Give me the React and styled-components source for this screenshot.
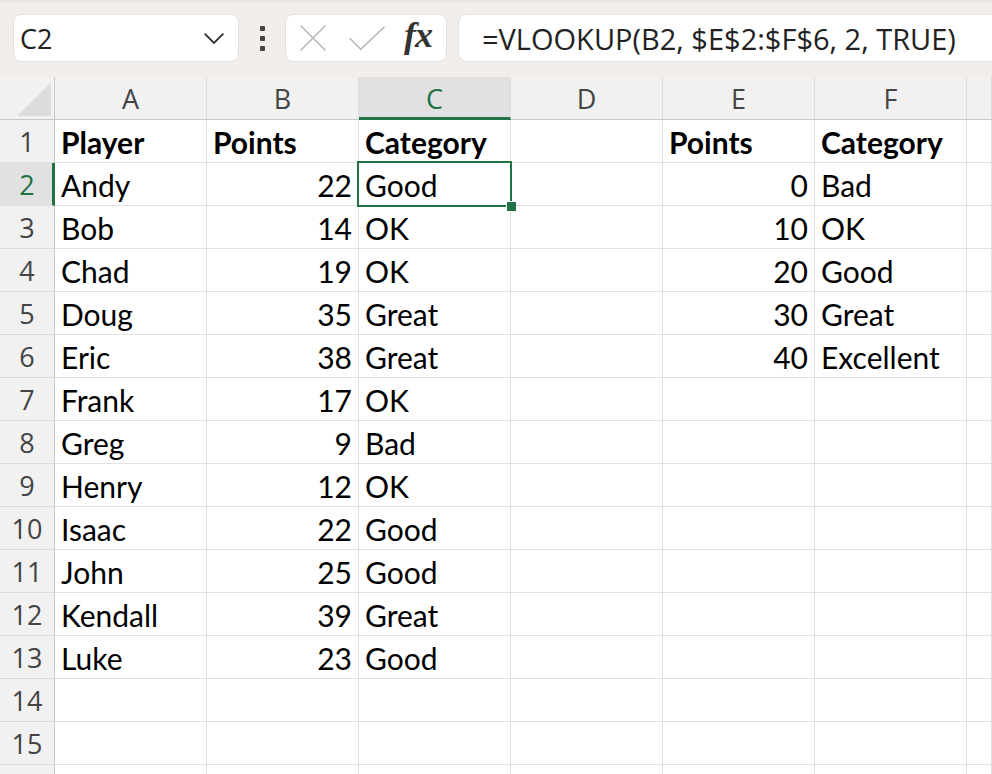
import React from 'react'
import styled, { createGlobalStyle, css } from 'styled-components'

const GlobalStyle = createGlobalStyle`
  html, body {
    margin: 0;
    padding: 0;
    background: #ffffff;
    overflow: hidden;
  }
  * { box-sizing: border-box; }
`

const COLS = ['A', 'B', 'C', 'D', 'E', 'F', '']
const SELECTED_COL = 'C'
const SELECTED_ROW = 2
const VISIBLE_ROWS = 15

const data = [
  [{ v: 'Player', b: true }, { v: 'Points', b: true }, { v: 'Category', b: true }, null, { v: 'Points', b: true }, { v: 'Category', b: true }],
  ['Andy', 22, 'Good', null, 0, 'Bad'],
  ['Bob', 14, 'OK', null, 10, 'OK'],
  ['Chad', 19, 'OK', null, 20, 'Good'],
  ['Doug', 35, 'Great', null, 30, 'Great'],
  ['Eric', 38, 'Great', null, 40, 'Excellent'],
  ['Frank', 17, 'OK'],
  ['Greg', 9, 'Bad'],
  ['Henry', 12, 'OK'],
  ['Isaac', 22, 'Good'],
  ['John', 25, 'Good'],
  ['Kendall', 39, 'Great'],
  ['Luke', 23, 'Good'],
  [],
  [],
  [],
]

export default function App() {
  return (
    <Page>
      <GlobalStyle />
      <Toolbar>
        <NameBox>
          <span>C2</span>
          <svg width="30" height="30" viewBox="0 0 24 24" fill="none" stroke="#333" strokeWidth="1.5">
            <path d="M4.5 8.5l7.5 7.5 7.5-7.5" />
          </svg>
        </NameBox>
        <Dots>
          <i /><i /><i />
        </Dots>
        <FxBox>
          <svg width="30" height="30" viewBox="0 0 24 24" fill="none" stroke="#b3b3b3" strokeWidth="1.1">
            <path d="M2 2l20 20M22 2L2 22" />
          </svg>
          <svg width="38" height="30" viewBox="0 0 30 24" fill="none" stroke="#b3b3b3" strokeWidth="1.1">
            <path d="M1 12l9 9L29 3" />
          </svg>
          <FxText>fx</FxText>
        </FxBox>
        <FormulaBox>=VLOOKUP(B2, $E$2:$F$6, 2, TRUE)</FormulaBox>
      </Toolbar>

      <Sheet>
        <Corner><Triangle /></Corner>
        {COLS.map((c, i) => (
          <ColHeader key={i} $active={c === SELECTED_COL}>{c}</ColHeader>
        ))}

        {data.map((row, r) => (
          <React.Fragment key={r}>
            <RowHeader $active={r + 1 === SELECTED_ROW}>
              {r < VISIBLE_ROWS ? r + 1 : ''}
            </RowHeader>
            {COLS.map((c, ci) => {
              const raw = row[ci]
              const cell = raw && typeof raw === 'object' ? raw : raw == null ? null : { v: raw }
              const isNum = cell && typeof cell.v === 'number'
              const selected = c === SELECTED_COL && r + 1 === SELECTED_ROW
              return (
                <Cell key={ci} $num={isNum} $bold={cell && cell.b}>
                  {cell ? cell.v : ''}
                  {selected && (
                    <Selection>
                      <Handle />
                    </Selection>
                  )}
                </Cell>
              )
            })}
          </React.Fragment>
        ))}
      </Sheet>
    </Page>
  )
}

const Page = styled.div`
  width: 992px;
  height: 774px;
  overflow: hidden;
  font-family: 'Open Sans', 'Noto Sans', sans-serif;
`

const Toolbar = styled.div`
  height: 77px;
  background: #f1eeec;
  display: flex;
  align-items: flex-start;
  padding: 11px 0 0 13px;
  border-top: 3px solid #e9e6e4;
`

const boxBase = css`
  height: 48px;
  background: #ffffff;
  border: 1px solid #e4e1df;
  border-radius: 8px;
  display: flex;
  align-items: center;
`

const NameBox = styled.div`
  ${boxBase};
  width: 226px;
  justify-content: space-between;
  padding: 0 9px 0 6px;
  font-size: 27px;
  color: #222;
`

const Dots = styled.div`
  width: 46px;
  height: 48px;
  display: flex;
  flex-direction: column;
  align-items: center;
  justify-content: center;
  gap: 5px;

  i {
    width: 5px;
    height: 5px;
    border-radius: 1px;
    background: #444;
  }
`

const FxBox = styled.div`
  ${boxBase};
  width: 162px;
  padding: 0 8px 0 12px;
  gap: 20px;
`

const FxText = styled.span`
  font-family: 'Liberation Serif', 'DejaVu Serif', serif;
  font-style: italic;
  font-weight: bold;
  font-size: 36px;
  color: #333;
  letter-spacing: -1px;
  margin: -6px 0 0 -2px;
`

const FormulaBox = styled.div`
  ${boxBase};
  flex: 1;
  margin-left: 11px;
  border-radius: 8px 0 0 8px;
  border-right: none;
  padding-left: 23px;
  font-size: 29px;
  color: #222;
  white-space: nowrap;
`

const Sheet = styled.div`
  display: grid;
  grid-template-columns: 55px repeat(6, 152px) 1fr;
  grid-template-rows: 43px;
  grid-auto-rows: 43px;
`

const Corner = styled.div`
  background: #f1f1f1;
  border-right: 1px solid #c9c9c9;
  border-bottom: 1px solid #c9c9c9;
  display: flex;
  align-items: flex-end;
  justify-content: flex-end;
  padding: 0 3px 3px 0;
`

const Triangle = styled.div`
  width: 34px;
  height: 33px;
  background: #dcdcdc;
  clip-path: polygon(100% 0, 100% 100%, 0 100%);
`

const ColHeader = styled.div`
  background: ${p => (p.$active ? '#e1e1e1' : '#f1f1f1')};
  color: ${p => (p.$active ? '#217346' : '#444')};
  border-right: 1px solid #dcdcdc;
  border-bottom: ${p => (p.$active ? '3px solid #217346' : '1px solid #c9c9c9')};
  display: flex;
  align-items: center;
  justify-content: center;
  font-size: 27px;
  padding-top: ${p => (p.$active ? '2px' : '0')};
`

const RowHeader = styled.div`
  background: ${p => (p.$active ? '#e1e1e1' : '#f1f1f1')};
  color: ${p => (p.$active ? '#217346' : '#444')};
  border-right: ${p => (p.$active ? '3px solid #217346' : '1px solid #c9c9c9')};
  border-bottom: 1px solid #dcdcdc;
  display: flex;
  align-items: center;
  justify-content: center;
  font-size: 27px;
  padding-left: ${p => (p.$active ? '2px' : '0')};
`

const Cell = styled.div`
  position: relative;
  border-right: 1px solid #e1e1e1;
  border-bottom: 1px solid #e1e1e1;
  display: flex;
  align-items: flex-end;
  justify-content: ${p => (p.$num ? 'flex-end' : 'flex-start')};
  padding: 0 6px 2px 6px;
  font-family: 'Lato', 'Liberation Sans', sans-serif;
  font-size: 30px;
  font-weight: ${p => (p.$bold ? 700 : 400)};
  color: #000;
  white-space: nowrap;
`

const Selection = styled.div`
  position: absolute;
  left: -2px;
  top: -2px;
  right: -2px;
  bottom: -2px;
  border: 2px solid #217346;
  pointer-events: none;
  z-index: 2;
`

const Handle = styled.div`
  position: absolute;
  right: -6px;
  bottom: -6px;
  width: 10px;
  height: 10px;
  background: #217346;
  border-left: 1px solid #fff;
  border-top: 1px solid #fff;
`
